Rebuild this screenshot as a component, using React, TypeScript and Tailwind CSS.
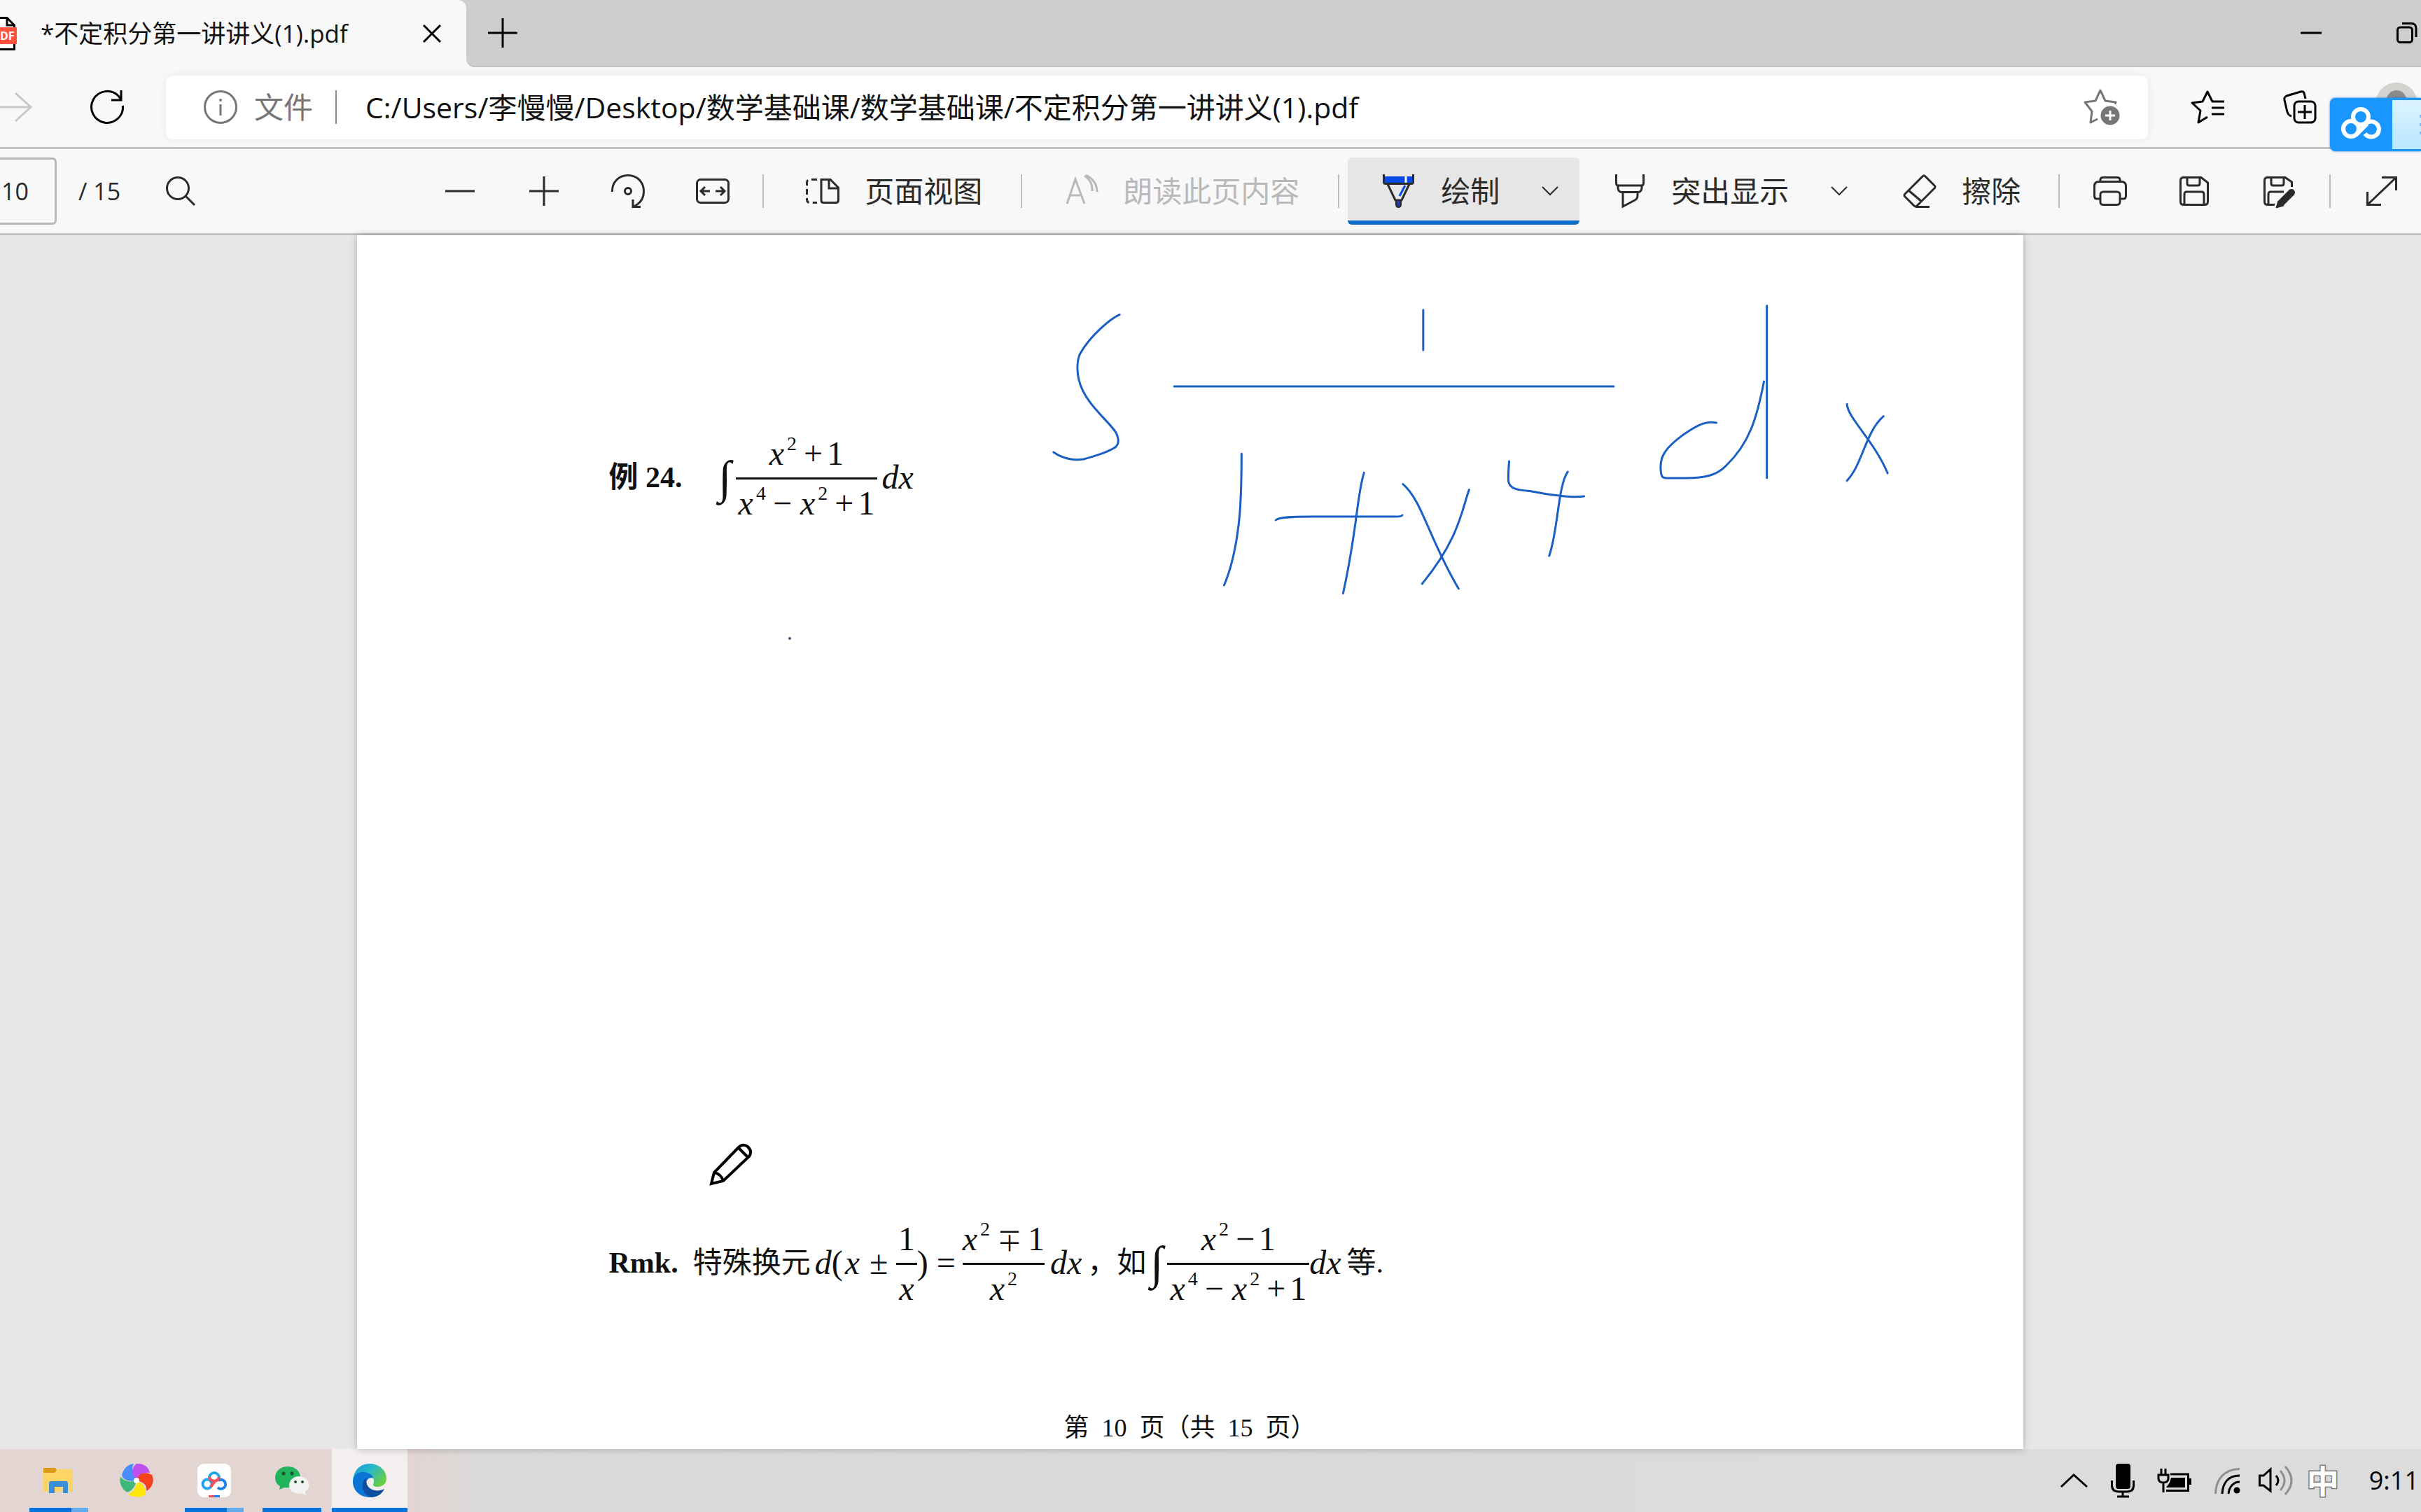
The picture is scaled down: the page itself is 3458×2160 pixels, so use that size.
import React from 'react';

type IconProps = {
  w: number;
  h: number;
  className?: string;
  sw?: number;
  children: React.ReactNode;
};

function Icon({ w, h, className = '', sw = 3, children }: IconProps) {
  return (
    <svg
      width={w}
      height={h}
      viewBox={`0 0 ${w} ${h}`}
      fill="none"
      stroke="currentColor"
      strokeWidth={sw}
      className={`block shrink-0 overflow-visible ${className}`}
      aria-hidden="true"
    >
      {children}
    </svg>
  );
}

function Separator({ className = '' }: { className?: string }) {
  return <div className={`h-12 w-[2px] shrink-0 bg-[#bdbdbd] ${className}`} />;
}

function TabBar() {
  return (
    <div className="flex h-24 bg-[#f8f8f8]">
      <div className="w-[666px] shrink-0 bg-[#cecece]">
        <div className="flex h-full items-center rounded-tr-xl bg-[#f8f8f8]">
          <Icon w={24} h={48}>
            <path d="M0 1.5H10L20.500 12V46.500H0" fill="#fff" stroke="#000" />
            <path d="M10 1.500V12H20.500" stroke="#000" />
            <rect x="-24" y="15" width="48" height="24" fill="#ff5340" stroke="none" />
            <text x="0" y="33" fill="#fff" stroke="none" fontSize="16" className="font-['Open_Sans',sans-serif] font-bold">DF</text>
          </Icon>
          <div className="ml-[34px] text-[35px] leading-[48px] whitespace-nowrap text-[#111]">*不定积分第一讲讲义(1).pdf</div>
          <button aria-label="关闭标签页" className="mr-9 ml-auto">
            <Icon w={26} h={26} className="text-black">
              <path d="M1 1L25 25M25 1L1 25" />
            </Icon>
          </button>
        </div>
      </div>
      <div className="flex flex-1 items-center rounded-bl-xl border-b-2 border-[#c2c2c2] bg-[#cecece] text-black">
        <button aria-label="新建标签页" className="ml-[31px]">
          <Icon w={42} h={42}>
            <path d="M21 0V42M0 21H42" />
          </Icon>
        </button>
        <button aria-label="最小化" className="ml-auto">
          <Icon w={30} h={30}>
            <path d="M0 15H30" />
          </Icon>
        </button>
        <button aria-label="还原" className="mr-[5px] ml-[107px]">
          <Icon w={30} h={30}>
            <rect x="1.500" y="7" width="21" height="21.500" rx="4" />
            <path d="M8 1.500H21Q28 1.500 28 9V21" />
          </Icon>
        </button>
      </div>
    </div>
  );
}

function AddressBar() {
  return (
    <div className="relative flex h-[117px] items-center border-b-3 border-[#c4c4c4] bg-[#f8f8f8]">
      <button aria-label="前进" className="text-[#c8c8c8]">
        <Icon w={45} h={42}>
          <path d="M0 21H44M22 1L44 21L22 41" />
        </Icon>
      </button>
      <button aria-label="刷新" className="ml-[84px] text-black">
        <Icon w={48} h={48}>
          <path d="M46.500 22A22.500 22.500 0 1 1 40 8L44 13" />
          <path d="M44 0V14H30" />
        </Icon>
      </button>
      <div className="ml-[60px] flex h-[91px] flex-1 items-center rounded-[10px] bg-white shadow-[0_0_14px_rgba(0,0,0,0.06)]">
        <Icon w={48} h={48} className="ml-[54px] text-[#767676]">
          <circle cx="24" cy="24" r="22.500" />
          <path d="M24 20V36" />
          <circle cx="24" cy="14" r="2" fill="currentColor" stroke="none" />
        </Icon>
        <label htmlFor="url" className="ml-6 text-[42px] leading-[56px] text-[#767676]">文件</label>
        <div className="ml-8 h-12 w-[2px] bg-[#8a8a8a]" />
        <input
          id="url"
          type="text"
          defaultValue="C:/Users/李慢慢/Desktop/数学基础课/数学基础课/不定积分第一讲讲义(1).pdf"
          className="ml-[41px] h-16 min-w-0 flex-1 bg-transparent pb-1 text-[41px] text-[#111] outline-none"
        />
        <button aria-label="添加到收藏夹" className="mr-10 text-[#767676]">
          <Icon w={52} h={52}>
            <path d="M20 43L10 48L12 32L2 19L17 17L24 2L31 17L46 19L45 22" strokeLinejoin="round" />
            <circle cx="38" cy="38" r="13.500" fill="currentColor" stroke="none" />
            <path d="M38 31V45M31 38H45" stroke="#fff" />
          </Icon>
        </button>
      </div>
      <button aria-label="收藏夹" className="ml-[61px] text-black">
        <Icon w={48} h={48}>
          <path d="M24 38L11 46L14 29L2 18L17 16L24 2L31 16H48M30 25H48M30 34H48" strokeLinejoin="round" />
        </Icon>
      </button>
      <button aria-label="集锦" className="mr-[149px] ml-[84px] text-black">
        <Icon w={48} h={48}>
          <path d="M32 12L30 4Q29 1 25 2L5 8Q1 10 2 14L6 31Q8 36 12 37" />
          <rect x="16" y="16" width="30" height="30" rx="6" />
          <path d="M31 21V41M21 31H41" />
        </Icon>
      </button>
      {/* cloud drive widget floats over the profile button */}
      <div className="absolute top-[22px] right-[5px] size-[60px] rounded-full bg-[#d4d2cf]">
        <div className="mx-auto mt-[11px] size-7 rounded-full bg-[#8a8a8a]" />
      </div>
      <div className="absolute top-11 right-0 z-10 flex h-[76px] w-[130px] rounded-l-lg bg-[#1a97ff] py-[3px] shadow-[0_0_3px_#1673d8]">
        <Icon w={57} h={46} sw={6} className="mx-4 my-[10px] text-white">
          <circle cx="28" cy="14" r="11" />
          <circle cx="14" cy="31" r="11" />
          <path d="M21 40L37 24" />
          <path d="M34 38A11 11 0 1 0 36 23" />
        </Icon>
        <div className="flex flex-1 items-center justify-end bg-linear-to-b from-[#dcf3ff] to-[#b9e6ff]">
          <div className="flex flex-col gap-2">
            <span className="h-1 w-[2px] bg-[#7fb6ee]" />
            <span className="h-1 w-[2px] bg-[#7fb6ee]" />
            <span className="h-1 w-[2px] bg-[#7fb6ee]" />
          </div>
        </div>
      </div>
    </div>
  );
}

function Toolbar() {
  return (
    <div className="flex h-[123px] shrink-0 items-center border-b-3 border-[#c4c4c4] bg-[#f8f8f8] text-[42px] leading-[56px] whitespace-nowrap text-[#2b2b2b]">
      <input
        type="text"
        aria-label="页码"
        defaultValue="10"
        className="h-24 w-[81px] rounded-r-md border-3 border-l-0 border-[#b8b8b8] bg-transparent pl-[2px] text-[34px] outline-none"
      />
      <div className="ml-[31px] text-[34px]">/ 15</div>
      <button aria-label="查找" className="ml-[65px]">
        <Icon w={42} h={42}>
          <circle cx="17" cy="17" r="15.500" />
          <path d="M28 28L41 41" />
        </Icon>
      </button>
      <button aria-label="缩小" className="ml-[357px]">
        <Icon w={42} h={42}>
          <path d="M0 21H42" />
        </Icon>
      </button>
      <button aria-label="放大" className="ml-[78px]">
        <Icon w={42} h={42}>
          <path d="M21 0V42M0 21H42" />
        </Icon>
      </button>
      <button aria-label="旋转" className="ml-[75px]">
        <Icon w={48} h={48}>
          <path d="M1.500 25C1 11 11 1.500 24 1.500S46.500 11 46.500 24C46.500 34 41 42 32 46" />
          <path d="M31 36V46.500H42" />
          <circle cx="24" cy="24" r="4.500" />
        </Icon>
      </button>
      <button aria-label="适合宽度" className="ml-[73px]">
        <Icon w={48} h={36}>
          <rect x="1.500" y="1.500" width="45" height="33" rx="5" />
          <path d="M7 18H20M28 18H41M13 12L7 18L13 24M35 12L41 18L35 24" />
        </Icon>
      </button>
      <Separator className="ml-[47px]" />
      <button className="ml-[60px] flex items-center">
        <Icon w={48} h={36}>
          <path d="M22 1.500H35L46.500 13V31Q46.500 34.500 43 34.500H25Q22 34.500 22 31Z" />
          <path d="M33 2V14H46" />
          <path d="M16 1.500H6Q1.500 1.500 1.500 6V30Q1.500 34.500 6 34.500H16" strokeDasharray="8 5" />
        </Icon>
        <span className="ml-[36px]">页面视图</span>
      </button>
      <Separator className="ml-[55px]" />
      <button disabled className="ml-[63px] flex items-center text-[#b9b9b9]">
        <Icon w={45} h={48}>
          <path d="M1 42L13 7L26 42M5 30H21" />
          <path d="M26 2Q38 10 37 24M28 1Q44 9 44 25" />
        </Icon>
        <span className="ml-[36px]">朗读此页内容</span>
      </button>
      <Separator className="ml-[55px]" />
      <button className="ml-3 flex h-24 items-center rounded-md border-b-6 border-[#0a6cc4] bg-[#e6e6e6] pt-[6px] pr-[31px] pl-[50px]">
        <Icon w={45} h={48}>
          <rect x="3" y="3" width="39" height="10" fill="#0a4be8" stroke="none" />
          <path d="M33 3V12" stroke="#fff" strokeWidth="3" />
          <path d="M1.500 0V11Q1.500 13.500 4 13.500H41Q43.500 13.500 43.500 11V0M7 14L18 37H27L38 14" />
          <path d="M32 16L24 31" stroke="#0a4be8" />
          <path d="M19 37H26V43Q26 47 22.500 47Q19 47 19 43Z" fill="#1b3ab4" strokeWidth="2" />
        </Icon>
        <span className="ml-[38px]">绘制</span>
        <Icon w={22} h={12} sw={2} className="ml-[61px]">
          <path d="M0 0L11 11L22 0" />
        </Icon>
      </button>
      <button className="ml-[51px] flex items-center">
        <Icon w={42} h={48}>
          <path d="M1.500 0V13Q1.500 16 5 16H37Q40.500 16 40.500 13V0" />
          <path d="M4 16V20Q5 25.500 9 25.500H33Q37 25.500 38 20V16" />
          <path d="M11 26V46L28 37Q32 35 32 30V26" />
        </Icon>
        <span className="ml-[38px]">突出显示</span>
        <Icon w={22} h={12} sw={2} className="ml-[61px]">
          <path d="M0 0L11 11L22 0" />
        </Icon>
      </button>
      <button className="ml-20 flex items-center">
        <Icon w={48} h={48}>
          <path d="M28 3Q30 1 32 3L45 16Q47 18 45 20L20 45Q18 47 16 45L3 32Q1 30 3 28ZM8 23L27 39M18 46.500H38" />
        </Icon>
        <span className="ml-[36px]">擦除</span>
      </button>
      <Separator className="ml-[54px]" />
      <button aria-label="打印" className="ml-[48px]">
        <Icon w={48} h={42}>
          <path d="M10 9V5Q10 1.500 14 1.500H34Q38 1.500 38 5V9" />
          <path d="M10 32H5Q1.500 32 1.500 28V14Q1.500 7.500 8 7.500H40Q46.500 7.500 46.500 14V28Q46.500 32 43 32H38" />
          <rect x="10" y="22" width="28" height="18.500" rx="4" />
        </Icon>
      </button>
      <button aria-label="保存" className="ml-[75px]">
        <Icon w={42} h={42}>
          <path d="M6 1.500H31L40.500 9V36Q40.500 40.500 36 40.500H6Q1.500 40.500 1.500 36V6Q1.500 1.500 6 1.500ZM11 2V10Q11 13 14 13H26Q29 13 29 10V2M7 40V26Q7 22 10 22H32Q35 22 35 26V40" />
        </Icon>
      </button>
      <button aria-label="另存为" className="ml-[78px] pt-1">
        <Icon w={48} h={46}>
          <path d="M16 40.500H6Q1.500 40.500 1.500 36V6Q1.500 1.500 6 1.500H31L40.500 8V15M11 2V10Q11 13 14 13H26Q29 13 29 10V2M7 40V26Q7 22 10 22H29" />
          <path d="M40 23L25 38" strokeWidth="10" strokeLinecap="round" />
          <path d="M21 35L18 45L29 42Z" fill="currentColor" strokeWidth="1" />
        </Icon>
      </button>
      <Separator className="ml-[46px]" />
      <button aria-label="全屏" className="mr-[34px] ml-auto">
        <Icon w={44} h={42}>
          <path d="M2 40L42 2M22 1.500H42.500V20M1.500 22V40.500H21" />
        </Icon>
      </button>
    </div>
  );
}

function Sup({ children }: { children: React.ReactNode }) {
  return <span className="mr-[10px] ml-1 -translate-y-[21px] text-[28px] not-italic">{children}</span>;
}

function Op({ children, className = 'mr-[6px]' }: { children: React.ReactNode; className?: string }) {
  return <span className={`not-italic ${className}`}>{children}</span>;
}

function Num({ children }: { children: React.ReactNode }) {
  return <span className="not-italic">{children}</span>;
}

type FractionProps = { top: React.ReactNode; bottom: React.ReactNode; className?: string };

function Fraction({ top, bottom, className = '' }: FractionProps) {
  return (
    <span className={`inline-flex flex-col items-center text-[48px] leading-[48px] italic ${className}`}>
      <span className="flex h-[60px] items-baseline pt-[2px]">{top}</span>
      <span className="h-[3px] w-full bg-[#111]" />
      <span className="flex h-14 items-baseline px-1 pt-[10px]">{bottom}</span>
    </span>
  );
}

function Denominator() {
  return (
    <>
      x<Sup>4</Sup><Op className="mr-3">−</Op>x<Sup>2</Sup><Op>+</Op><Num>1</Num>
    </>
  );
}

function Integral({ className = '' }: { className?: string }) {
  return <span className={`text-[66px] leading-[66px] ${className}`}>∫</span>;
}

function Ink() {
  return (
    <svg
      className="pointer-events-none absolute top-[64px] left-[940px] h-[480px] w-[1300px]"
      viewBox="0 0 1568 1440"
      preserveAspectRatio="none"
      fill="none"
      stroke="#1a5fc4"
      strokeWidth="3"
      aria-hidden="true"
    >
      <g strokeLinecap="round" className="[&>path]:[vector-effect:non-scaling-stroke]">
        <path d="M180 148C165 165 130 235 112 315C106 345 106 395 110 430C120 530 160 600 174 655C180 690 178 705 172 718C155 745 135 755 118 768C100 775 82 765 66 738" />
        <path d="M703 128V300" />
        <path d="M274 456H1031" />
        <path d="M390 745C390 850 390 900 387 1000C383 1110 375 1220 360 1308" />
        <path d="M449 1029C455 1015 480 1014 510 1014H655Q666 1014 667 1008" />
        <path d="M601 826C588 930 590 1060 565 1343" />
        <path d="M668 875C700 940 715 1120 764 1323" />
        <path d="M782 899C770 980 765 1110 701 1302" />
        <path d="M851 777C850 810 849 840 850 865C853 900 870 900 890 906C920 920 960 935 980 927" />
        <path d="M952 822C935 880 935 1080 920 1182" />
        <path d="M1208 612C1185 600 1165 640 1150 665C1120 720 1112 755 1112 800C1112 850 1116 849 1125 849H1155C1190 849 1210 835 1225 795C1265 700 1278 590 1290 435" />
        <path d="M1295 110V848" />
        <path d="M1433 532C1434 590 1480 690 1503 828" />
        <path d="M1496 584C1465 650 1460 790 1433 860" />
      </g>
    </svg>
  );
}

function Document() {
  return (
    <main className="flex flex-1 justify-center bg-[#e7e7e7] pr-[59px]">
      <article className="relative flex w-[2380px] flex-col bg-white pt-[286px] font-['Liberation_Serif','Noto_Sans_CJK_SC',serif] text-[42px] leading-[48px] whitespace-nowrap text-[#111] shadow-[0_0_10px_rgba(0,0,0,0.25)]">
        <p className="flex items-center pl-[360px]">
          <b className="mr-[52px]">例 24.</b>
          <Integral className="mr-[6px]" />
          <Fraction className="mr-[6px]" top={<>x<Sup>2</Sup><Op>+</Op><Num>1</Num></>} bottom={<Denominator />} />
          <i className="text-[48px]">dx</i>
        </p>
        <p className="mt-[1003px] flex items-center pl-[360px]">
          <b className="mr-[21px]">Rmk.</b>
          特殊换元
          <i className="ml-[6px] text-[48px]">d<Num>(</Num></i>
          <i className="ml-[3px] text-[48px]">x</i>
          <span className="ml-[14px] text-[48px]">±</span>
          <Fraction className="ml-3" top={<Num>1</Num>} bottom="x" />
          <span className="text-[48px]">)</span>
          <span className="mr-[10px] ml-3 text-[48px]">=</span>
          <Fraction
            className="mr-2"
            top={<>x<Sup>2</Sup><Op className="mr-2 text-[36px]">∓</Op><Num>1</Num></>}
            bottom={<>x<span className="ml-1 -translate-y-[21px] text-[28px] not-italic">2</span></>}
          />
          <i className="mr-2 text-[48px]">dx</i>
          ，如
          <Integral className="mr-[6px] ml-[6px]" />
          <Fraction top={<>x<Sup>2</Sup><Op>−</Op><Num>1</Num></>} bottom={<Denominator />} />
          <i className="mr-2 text-[48px]">dx</i>
          等.
        </p>
        <footer className="mt-auto pb-[6px] text-center text-[36px]">
          第 <span className="mx-[9px]">10</span> 页（共 <span className="mx-[9px]">15</span> 页）
        </footer>
        <Ink />
        <div className="absolute top-[574px] left-[616px] size-[4px] rounded-full bg-[#33557a]" />
        <div className="absolute top-[1297px] left-[504px] text-black">
          <Icon w={60} h={60} sw={4}>
            <path d="M2 58L6 42L41 6Q47 0 54 5Q61 12 56 19L19 54ZM6 42Q16 44 19 54M41 7L54 20" />
          </Icon>
        </div>
      </article>
    </main>
  );
}

type AppButtonProps = { label: string; bar?: string; active?: boolean; more?: boolean; children: React.ReactNode };

function AppButton({ label, bar = '', active = false, more = false, children }: AppButtonProps) {
  return (
    <button
      aria-label={label}
      className={`flex h-full w-[108px] flex-col items-center justify-end ${active ? 'bg-[#f4efee]' : ''}`}
    >
      <span className="mb-[15px]">{children}</span>
      <span className={`flex h-[6px] justify-end ${bar}`}>{more && <span className="w-6 bg-[#62abec]" />}</span>
    </button>
  );
}

function Taskbar() {
  return (
    <nav className="flex h-[90px] shrink-0 items-center bg-linear-to-r from-[#e2d5d2] from-[17%] via-[#dadada] via-[20%] to-[#dcdcdc] text-black">
      <div className="ml-[30px] flex h-full gap-[3px]">
        <AppButton label="文件资源管理器" bar="w-[84px] bg-[#0872dc]" more>
          <Icon w={44} h={48}>
            <g stroke="none">
              <path d="M0 6H17L20 10L17 14H0Z" fill="#dd9a12" />
              <path d="M0 13H16L20 8H42V40H0Z" fill="#ffd467" />
              <path d="M8 42V28Q8 25 11 25H32Q35 25 35 28V42H28V33H16V42Z" fill="#3b8fd6" />
            </g>
          </Icon>
        </AppButton>
        <AppButton label="相册" bar="w-[84px]">
          <Icon w={48} h={48}>
            <g stroke="none">
              <path d="M24 24C14 15 18 4 24 0C34 -1 42 5 43 13C35 12 27 15 24 24Z" fill="#c04ff0" />
              <path d="M24 24C27 12 38 11 46 16C50 24 47 34 38 39C39 30 34 26 24 24Z" fill="#f4421c" />
              <path d="M24 24C35 29 38 38 36 45C28 49 19 48 12 44C20 40 24 34 24 24Z" fill="#ffe60c" />
              <path d="M24 24C21 36 14 42 9 40C2 34 -1 27 1 19C7 25 14 27 24 24Z" fill="#3fb877" />
              <path d="M24 24C10 27 4 21 3 16C6 6 12 1 20 0C16 9 18 17 24 24Z" fill="#4b8df8" />
              <circle cx="24" cy="24" r="4" fill="#fff" />
            </g>
          </Icon>
        </AppButton>
        <AppButton label="百度网盘" bar="w-[84px] bg-[#0872dc]" more>
          <Icon w={48} h={48} sw={4}>
            <rect width="48" height="48" rx="9" fill="#fff" stroke="none" />
            <circle cx="14" cy="29" r="6.500" stroke="#22a3ec" />
            <path d="M29 34A6.500 6.500 0 1 0 30 24" stroke="#1d7fe8" />
            <path d="M17 20A7 7 0 1 1 31 20" stroke="#22a3ec" />
            <path d="M17 19Q18 24 24 25Q30 24 31 19M25 25L19 33" stroke="#f2505a" />
            <path d="M16 46.500H24" stroke="#f2505a" strokeWidth="3" />
            <path d="M24 46.500H32" stroke="#1d7fe8" strokeWidth="3" />
          </Icon>
        </AppButton>
        <AppButton label="微信" bar="w-[84px] bg-[#0872dc]">
          <Icon w={48} h={48}>
            <g stroke="none">
              <path d="M18 4C7 4 0 11 0 20C0 26 3 30 7 32L6 37L13 34C28 36 36 28 36 20C36 10 28 4 18 4Z" fill="#22b45c" />
              <path d="M34 18C26 18 20 24 20 31C20 38 26 43 34 43L37 42L44 45L43 40C47 37 49 34 48 30C48 23 42 18 34 18Z" fill="#f3f3f3" />
              <g fill="#14532d">
                <circle cx="12" cy="14" r="2.500" />
                <circle cx="24" cy="14" r="2.500" />
                <circle cx="29" cy="26" r="2" />
                <circle cx="39" cy="26" r="2" />
              </g>
            </g>
          </Icon>
        </AppButton>
        <AppButton label="Microsoft Edge" bar="w-full bg-[#0872dc]" active>
          <Icon w={48} h={48}>
            <defs>
              <linearGradient id="edgeTop" x1="0" y1="0" x2="1" y2="0.600">
                <stop offset="0" stopColor="#1d9ad6" />
                <stop offset="0.500" stopColor="#27b8c9" />
                <stop offset="1" stopColor="#67cf45" />
              </linearGradient>
            </defs>
            <g stroke="none">
              <path d="M0 24C1 9 11 0 24 0C38 0 48 10 48 21C48 29 42 33 35 33C29 33 28 30 30 27C31 20 26 15 20 14C10 12 2 17 0 24Z" fill="url(#edgeTop)" />
              <path d="M0 24C1 15 9 11 17 12C25 13 29 18 29 21C23 18 18 24 19 31C20 39 28 44 35 46C16 53 -1 41 0 24Z" fill="#0c74d4" />
              <path d="M19 20C10 27 13 43 25 48C35 48 42 43 45 36C35 41 23 38 20 29C19 26 19 23 19 20Z" fill="#0d4f9e" />
            </g>
          </Icon>
        </AppButton>
      </div>
      <div className="ml-auto flex items-center">
        <button aria-label="显示隐藏的图标">
          <Icon w={39} h={20}>
            <path d="M1 19L19 2L38 19" />
          </Icon>
        </button>
        <Icon w={34} h={48} className="ml-[33px]">
          <rect x="7" y="0" width="21" height="36" rx="4" fill="currentColor" stroke="none" />
          <path d="M1.500 24V31Q1.500 40 12 40H23Q32.500 40 32.500 31V24M17 40V47M9 47H26" />
        </Icon>
        <Icon w={48} h={34} className="ml-[33px]">
          <path d="M18 8H43.500V31.500H12" />
          <path d="M19 13H39V27H12L17 20Z" fill="currentColor" stroke="none" />
          <path d="M45 14H48V23H45Z" fill="currentColor" stroke="none" />
          <path d="M1 9H15V15Q14 20 8 20Q2 20 1 15ZM5 0V8M11 0V8M8 20V34" />
        </Icon>
        <Icon w={36} h={37} className="ml-[33px]">
          <path d="M1.500 37C2 16 14 2 36 1.500" stroke="#8f8f8f" />
          <path d="M11 37C12 21 20 11 36 11M20 37C21 27 27 20 36 20" />
          <circle cx="32" cy="32" r="4.500" fill="currentColor" stroke="none" />
        </Icon>
        <Icon w={48} h={42} className="ml-[27px]">
          <path d="M1.500 14H7L17 5V36L7 28H1.500Z" />
          <path d="M25 14Q31 21 25 28" />
          <path d="M31 7Q43 21 31 35M38 1Q56 21 38 41" stroke="#8f8f8f" />
        </Icon>
        <button className="ml-[21px] text-[46px] leading-[48px] font-bold text-white [-webkit-text-stroke:3px_#7a7a7a] [paint-order:stroke_fill]">中</button>
        <time className="mr-[3px] ml-[43px] text-[36px] leading-[48px]">9:11</time>
      </div>
    </nav>
  );
}

export default function App() {
  return (
    <div className="flex min-h-screen flex-col overflow-hidden font-['Open_Sans','Noto_Sans_CJK_SC',sans-serif]">
      <TabBar />
      <AddressBar />
      <Toolbar />
      <Document />
      <Taskbar />
    </div>
  );
}
